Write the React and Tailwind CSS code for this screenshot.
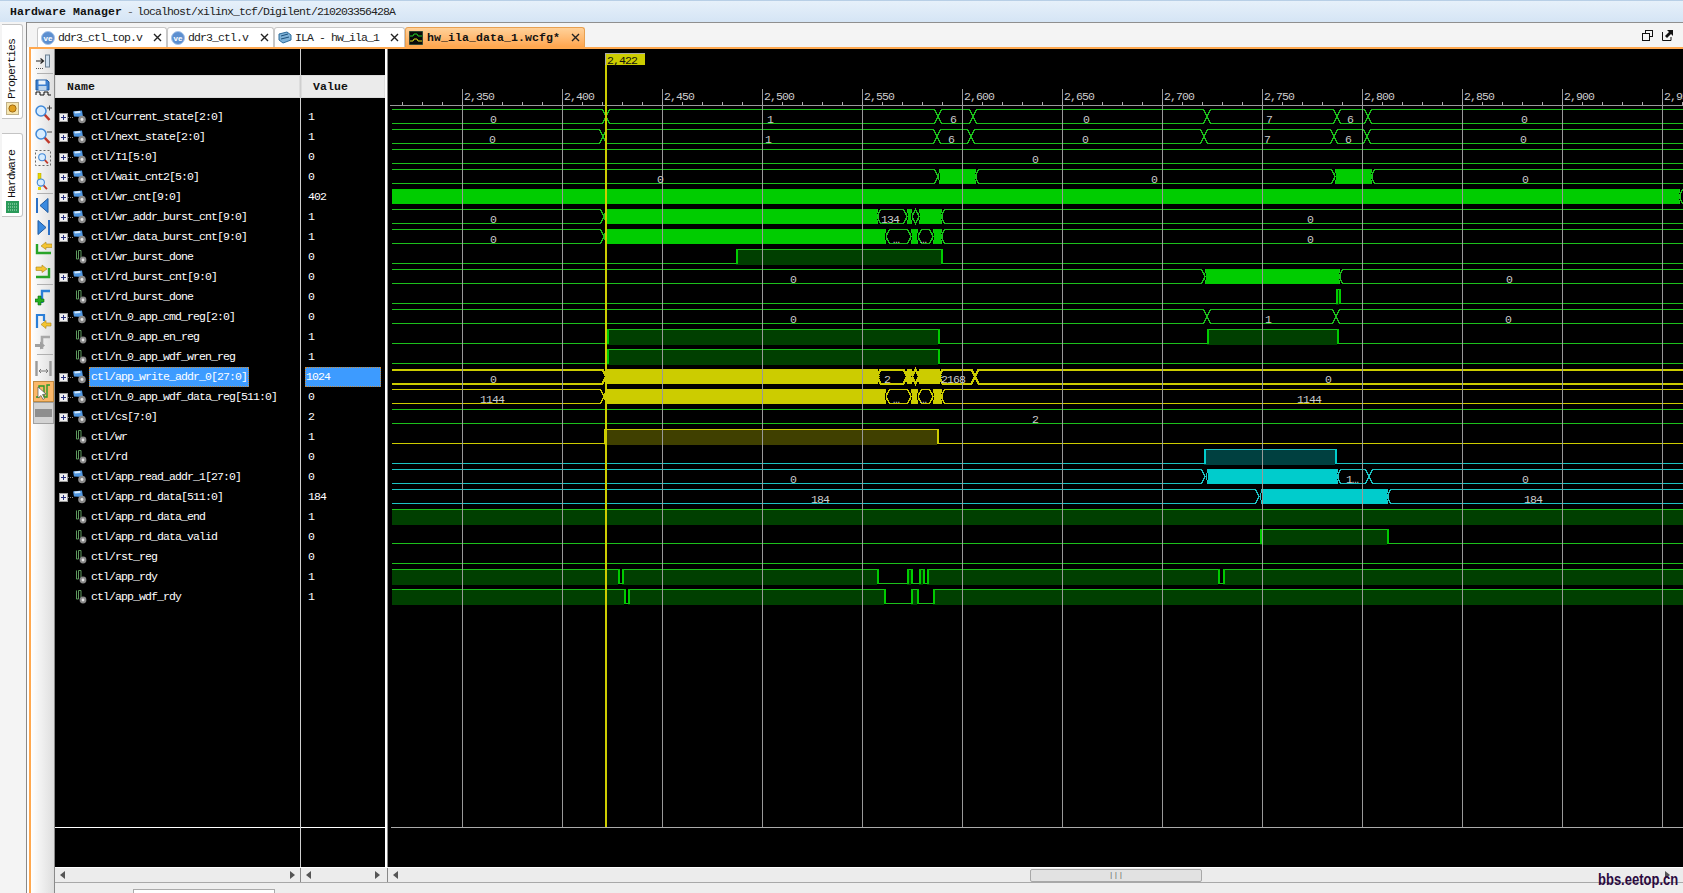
import React from "react";

const G = "#1cc01c", BR = "#00cc00", DG = "#003f00";
const Y = "#cccc00", DY = "#404000";
const C = "#1cc4c4", BC = "#00cccc", DC = "#004040";
const L = 392, R = 1683;
const topOf = (i) => 109 + 20 * i;

function Bus({ i, c, fc, w = 1, segs }) {
  const t = topOf(i) + 0.5, b = t + 14, m = (t + b) / 2;
  return (
    <g>
      {segs.map(([a, z, f], k) => {
        if (f) {
          const arms =
            (a > L ? `M${a - 2} ${m}L${a} ${t}M${a - 2} ${m}L${a} ${b}` : "") +
            (z < R ? `M${z + 2} ${m}L${z} ${t}M${z + 2} ${m}L${z} ${b}` : "");
          return (
            <g key={k}>
              <rect x={a} y={t - 0.5} width={z - a} height={15} fill={fc} />
              {arms ? <path d={arms} fill="none" stroke={c} strokeWidth={w} /> : null}
            </g>
          );
        }
        const ls = a <= L ? 0 : 3.5, rs = z >= R ? 0 : 3.5;
        const d = `M${a} ${ls ? m : t}L${a + ls} ${t}L${z - rs} ${t}L${z} ${rs ? m : t}` +
          (rs ? "" : `M${z} ${b}`) +
          `L${z - rs} ${b}L${a + ls} ${b}L${a} ${ls ? m : b}`;
        return <path key={k} d={d} fill="none" stroke={c} strokeWidth={w} />;
      })}
    </g>
  );
}

function Dig({ i, c, bc, fc, highs }) {
  const top = topOf(i), low = top + 14;
  let d = "";
  let cur = L;
  const first = highs[0];
  if (!first || first[0] > L) d = `M${L} ${low + 0.5}`;
  else d = `M${L} ${top + 0.5}`;
  highs.forEach(([a, z]) => {
    if (a > L) d += `L${a} ${low + 0.5}L${a} ${top + 0.5}`;
    d += `L${z} ${top + 0.5}`;
    if (z < R) d += `L${z} ${low + 0.5}`;
    cur = z;
  });
  if (cur < R) d += `L${R} ${low + 0.5}`;
  return (
    <g>
      {highs.map(([a, z], k) => (
        <rect key={k} x={a} y={top} width={z - a} height={16} fill={fc} />
      ))}
      <path d={d} fill="none" stroke={c} />
      {highs.flatMap(([a, z], k) => [
        a > L ? <rect key={`a${k}`} x={a - 0.5} y={top} width={2} height={15} fill={bc} /> : null,
        z < R ? <rect key={`z${k}`} x={z - 0.5} y={top} width={2} height={15} fill={bc} /> : null,
      ])}
    </g>
  );
}

const stateA = [[L, 606], [606, 938], [938, 973], [973, 1207], [1207, 1337], [1337, 1368], [1368, R]];
const stateB = [[L, 603], [603, 937], [937, 971], [971, 1204], [1204, 1334], [1334, 1367], [1367, R]];
const dataSegs = [[L, 604], [606, 885, 1], [886, 911], [912, 917, 1], [918, 933], [934, 941, 1], [941, R]];

const labels = [
  [0, 493, "0"], [0, 770, "1"], [0, 953, "6"], [0, 1086, "0"], [0, 1269, "7"], [0, 1350, "6"], [0, 1524, "0"],
  [1, 492, "0"], [1, 768, "1"], [1, 951, "6"], [1, 1085, "0"], [1, 1267, "7"], [1, 1348, "6"], [1, 1523, "0"],
  [2, 1035, "0"],
  [3, 660, "0"], [3, 1154, "0"], [3, 1525, "0"],
  [5, 493, "0"], [5, 890, "134"], [5, 1310, "0"],
  [6, 493, "0"], [6, 896, "…"], [6, 923, "…"], [6, 1310, "0"],
  [8, 793, "0"], [8, 1509, "0"],
  [10, 793, "0"], [10, 1268, "1"], [10, 1508, "0"],
  [13, 493, "0"], [13, 887, "2"], [13, 953, "2168"], [13, 1328, "0"],
  [14, 492, "1144"], [14, 896, "…"], [14, 923, "…"], [14, 1309, "1144"],
  [15, 1035, "2"],
  [18, 793, "0"], [18, 1352, "1…"], [18, 1525, "0"],
  [19, 820, "184"], [19, 1533, "184"],
];

const rulerLabels = [2350, 2400, 2450, 2500, 2550, 2600, 2650, 2700, 2750, 2800, 2850, 2900, 2950];
const rulerX = (t) => 462 + (t - 2350) * 2;

function Wave() {
  const ticks = [];
  for (let x = 402; x < R; x += 20) ticks.push(x);
  return (
    <svg width="1295" height="818" viewBox="388 49 1295 818" className="block bg-black shrink-0">
      <g shapeRendering="crispEdges">
        <Bus i={0} c={G} segs={stateA} />
        <Bus i={1} c={G} segs={stateB} />
        <Bus i={2} c={G} segs={[[L, R]]} />
        <Bus i={3} c={G} fc={BR} segs={[[L, 938], [940, 975, 1], [975, 1335], [1336, 1371, 1], [1371, R]]} />
        <Bus i={4} c={G} fc={BR} segs={[[L, 1679, 1], [1679, R]]} />
        <Bus i={5} c={G} fc={BR} segs={[[L, 604], [606, 877, 1], [877, 907], [908, 911, 1], [912, 919], [920, 941, 1], [941, R]]} />
        <Bus i={6} c={G} fc={BR} segs={dataSegs} />
        <Dig i={7} c={G} bc={BR} fc={DG} highs={[[736, 941]]} />
        <Bus i={8} c={G} fc={BR} segs={[[L, 1205], [1206, 1339, 1], [1339, R]]} />
        <Dig i={9} c={G} bc={BR} fc={DG} highs={[[1336, 1339]]} />
        <Bus i={10} c={G} segs={[[L, 1207], [1207, 1336], [1336, R]]} />
        <Dig i={11} c={G} bc={BR} fc={DG} highs={[[607, 938], [1207, 1337]]} />
        <Dig i={12} c={G} bc={BR} fc={DG} highs={[[607, 938]]} />
        <Bus i={13} c={Y} fc={Y} w={2} segs={[[L, 606], [607, 877, 1], [877, 907], [908, 911, 1], [912, 919], [920, 939, 1], [939, 975], [975, R]]} />
        <Bus i={14} c={Y} fc={Y} segs={dataSegs} />
        <Bus i={15} c={G} segs={[[L, R]]} />
        <Dig i={16} c={Y} bc={Y} fc={DY} highs={[[604, 937]]} />
        <Dig i={17} c={C} bc={BC} fc={DC} highs={[[1204, 1335]]} />
        <Bus i={18} c={C} fc={BC} segs={[[L, 1205], [1208, 1337, 1], [1337, 1369], [1369, R]]} />
        <Bus i={19} c={C} fc={BC} segs={[[L, 1259], [1262, 1387, 1], [1387, R]]} />
        <Dig i={20} c={G} bc={BR} fc={DG} highs={[[L, R]]} />
        <Dig i={21} c={G} bc={BR} fc={DG} highs={[[1260, 1387]]} />
        <Dig i={22} c={G} bc={BR} fc={DG} highs={[]} />
        <Dig i={23} c={G} bc={BR} fc={DG} highs={[[L, 618], [622, 877], [907, 911], [919, 923], [927, 1218], [1223, R]]} />
        <Dig i={24} c={G} bc={BR} fc={DG} highs={[[L, 624], [628, 884], [911, 917], [933, R]]} />

        {rulerLabels.map((t) => (
          <rect key={t} x={rulerX(t)} y={89} width={1} height={738} fill="#999999" />
        ))}
        <rect x={390} y={105} width={1293} height={1} fill="#999999" />
        {ticks.map((x) => (
          <rect key={x} x={x} y={102} width={1} height={3} fill="#aaaaaa" />
        ))}
        <rect x={391} y={827} width={1292} height={1} fill="#aaaaaa" />
      </g>

      <g className="font-['Liberation_Mono',monospace] text-[11.5px] tracking-[-0.9px]">
        {rulerLabels.map((t) => (
          <text key={t} x={rulerX(t) + 2} y={100} fill="#cccccc">{`${t.toString()[0]},${t.toString().slice(1)}`}</text>
        ))}
        {labels.map(([i, x, s], k) => (
          <text key={k} x={x} y={topOf(i) + 14} textAnchor="middle" fill="#cccccc">{s}</text>
        ))}
      </g>

      <rect x={605} y={53} width={2} height={774} fill={Y} />
      <rect x={605} y={53} width={40} height={12} fill="#aaaaaa" />
      <rect x={606} y={54} width={39} height={11} fill={Y} />
      <text x={607} y={64} fill="#111111" className="font-['Liberation_Mono',monospace] text-[11.5px] tracking-[-0.9px]">2,422</text>
    </svg>
  );
}

const Gear = ({ x = 9, y = 9, r = 3.8 }) => (
  <g>
    <circle cx={x} cy={y} r={r} fill="#8a8a8a" />
    <circle cx={x} cy={y} r="1.4" fill="#e4e4e4" />
  </g>
);

const BusIcon = () => (
  <svg width="13" height="14" viewBox="0 0 13 14" className="shrink-0">
    <path d="M0 1.5L9 0.5L10 7L1 6.5Z" fill="#4f96e0" />
    <path d="M1 1.5L7 1L7.5 3L2 3.5Z" fill="#cfe6fa" />
    <Gear x={9} y={9.5} />
  </svg>
);

const LeafIcon = () => (
  <svg width="12" height="14" viewBox="0 0 12 14" className="shrink-0">
    <path d="M1.5 0.5V9H3.5V0.5H6V7" fill="none" stroke="#5f9a5f" strokeWidth="1" />
    <Gear x={8} y={10} r={3.4} />
  </svg>
);

const Expand = () => (
  <span className="flex items-center shrink-0">
    <svg width="9" height="9" viewBox="0 0 9 9" className="block">
      <rect x="0.5" y="0.5" width="8" height="8" fill="#eeeeee" stroke="#9a9a9a" />
      <path d="M2 4.5H7M4.5 2V7" stroke="#27307f" strokeWidth="1" />
    </svg>
    <span className="w-[5px] border-t border-dotted border-[#888888]" />
  </span>
);

const signals = [
  ["ctl/current_state[2:0]", "1", 1], ["ctl/next_state[2:0]", "1", 1], ["ctl/I1[5:0]", "0", 1],
  ["ctl/wait_cnt2[5:0]", "0", 1], ["ctl/wr_cnt[9:0]", "402", 1], ["ctl/wr_addr_burst_cnt[9:0]", "1", 1],
  ["ctl/wr_data_burst_cnt[9:0]", "1", 1], ["ctl/wr_burst_done", "0", 0], ["ctl/rd_burst_cnt[9:0]", "0", 1],
  ["ctl/rd_burst_done", "0", 0], ["ctl/n_0_app_cmd_reg[2:0]", "0", 1], ["ctl/n_0_app_en_reg", "1", 0],
  ["ctl/n_0_app_wdf_wren_reg", "1", 0], ["ctl/app_write_addr_0[27:0]", "1024", 1, true],
  ["ctl/n_0_app_wdf_data_reg[511:0]", "0", 1], ["ctl/cs[7:0]", "2", 1], ["ctl/wr", "1", 0], ["ctl/rd", "0", 0],
  ["ctl/app_read_addr_1[27:0]", "0", 1], ["ctl/app_rd_data[511:0]", "184", 1], ["ctl/app_rd_data_end", "1", 0],
  ["ctl/app_rd_data_valid", "0", 0], ["ctl/rst_reg", "0", 0], ["ctl/app_rdy", "1", 0], ["ctl/app_wdf_rdy", "1", 0],
];

const Lens = ({ children }) => (
  <g>
    <path d="M9.5 10.5L14.5 16" stroke="#c0392b" strokeWidth="2.6" />
    <circle cx="6" cy="7" r="5" fill="#d6ecff" stroke="#3f88d8" strokeWidth="1.5" />
    {children}
  </g>
);

const Ico = ({ children, w = 17, h = 17 }) => (
  <svg width={w} height={h} viewBox={`0 0 ${w} ${h}`} className="block">{children}</svg>
);

const tools = [
  { h: 24, el: <Ico><path d="M1 8H8M5.5 5.5L8.5 8L5.5 10.5" fill="none" stroke="#222" strokeWidth="1.2" /><rect x="10.5" y="2" width="4" height="12" fill="#cfe0f0" stroke="#6b7f90" /><path d="M1 15.5H9" stroke="#555" strokeDasharray="1 1" /></Ico> },
  { sep: 1 },
  { h: 27, el: <Ico h={18}><path d="M1 1H12L14 3V11H1Z" fill="#3b7fd0" stroke="#1f5aa0" /><rect x="3.5" y="1.5" width="7" height="4" fill="#e9f2fb" /><rect x="3.5" y="7" width="8" height="4" fill="#bcd4ec" /><path d="M1 16V13H5V16H9V13H13V16H16" fill="none" stroke="#111" /></Ico> },
  { h: 23, el: <Ico><Lens /><path d="M12 4H17M14.5 1.5V6.5" stroke="#444" /></Ico> },
  { h: 23, el: <Ico><Lens /><path d="M12 5H17" stroke="#444" /></Ico> },
  { h: 23, el: <Ico><rect x="0.5" y="0.5" width="15" height="15" fill="none" stroke="#666" strokeDasharray="2 2" /><g transform="translate(3 2.5) scale(0.68)"><Lens /></g></Ico> },
  { h: 23, el: <Ico><rect x="3" y="0" width="3" height="9" fill="#e8d800" stroke="#a89a00" strokeWidth="0.5" /><rect x="3" y="14" width="3" height="3" fill="#e8d800" /><g transform="translate(1.5 4.5) scale(0.72)"><Lens /></g></Ico> },
  { sep: 1 },
  { h: 22, el: <Ico><path d="M2 1V16" stroke="#2b6fc4" strokeWidth="2" /><path d="M13 1.5L5 8.5L13 15.5Z" fill="#3a8ae0" stroke="#1f5aa0" /></Ico> },
  { h: 22, el: <Ico><path d="M14 1V16" stroke="#2b6fc4" strokeWidth="2" /><path d="M3 1.5L11 8.5L3 15.5Z" fill="#3a8ae0" stroke="#1f5aa0" /></Ico> },
  { h: 23, el: <Ico><path d="M2 3V12H16" fill="none" stroke="#28a428" strokeWidth="2.4" /><path d="M17 3H11V1L6 5L11 8.5V6.5H17Z" fill="#f4c430" stroke="#a8851a" strokeWidth="0.6" /></Ico> },
  { h: 23, el: <Ico><path d="M1 13H14V4" fill="none" stroke="#28a428" strokeWidth="2.4" /><path d="M1 3H7V1L12 5L7 8.5V6.5H1Z" fill="#f4c430" stroke="#a8851a" strokeWidth="0.6" /></Ico> },
  { sep: 1 },
  { h: 25, el: <Ico><path d="M7 14V2H15" fill="none" stroke="#2b7fd8" strokeWidth="2.4" /><path d="M3 7H6V10H9V13H6V16H3V13H0V10H3Z" fill="#22b022" stroke="#0f6a0f" strokeWidth="0.6" /></Ico> },
  { h: 22, el: <Ico><path d="M2 15V2H9V8" fill="none" stroke="#2b7fd8" strokeWidth="2.2" /><path d="M16 10H11V7.5L6 11.5L11 15.5V13H16Z" fill="#f4c430" stroke="#a8851a" strokeWidth="0.6" /></Ico> },
  { h: 22, el: <Ico><path d="M7 14V2H15" fill="none" stroke="#a8a8a8" strokeWidth="2.6" /><path d="M0 9H5V6.5L10 10.5L5 14.5V12H0Z" fill="#a0a0a0" /></Ico> },
  { sep: 1 },
  { h: 26, el: <Ico><path d="M1.5 1V16M15.5 1V16" stroke="#9a9a9a" strokeWidth="2.4" /><path d="M4 11H13M4 11L6 9M4 11L6 13M13 11L11 9M13 11L11 13" stroke="#777" fill="none" /></Ico> },
  { h: 21, active: 1, el: <Ico><path d="M1 14H4V3H9V14H12V2H15" fill="none" stroke="#2a9a2a" strokeWidth="1.4" /><path d="M3 4L3 15L6 12.5L8 16.5L9.5 15.5L7.5 11.5L11 11Z" fill="#fff" stroke="#555" strokeWidth="0.7" /></Ico> },
  { h: 22, pressed: 1, el: <span className="block w-[17px] h-[8px] bg-[#8e8e8e]" /> },
];

function Toolbar() {
  return (
    <div className="w-[24px] shrink-0 flex flex-col items-center border-r border-[#8a8a8a] bg-gradient-to-r from-white to-[#dedede]">
      {tools.map((t, k) =>
        t.sep ? (
          <div key={k} className="w-[16px] h-px bg-[#b0b0b0] shrink-0 ml-[5px]" />
        ) : (
          <div
            key={k}
            style={{ height: t.h }}
            className={`w-[21px] ml-[2px] flex items-center justify-center shrink-0 ${t.active ? "bg-[#fbb768] border border-[#c08a40]" : ""} ${t.pressed ? "bg-[#d3d3d3] border border-[#a0a0a0]" : ""}`}
          >
            {t.el}
          </div>
        )
      )}
    </div>
  );
}

const Header = ({ children, pl }) => (
  <div className={`h-[23px] shrink-0 bg-[#ebebeb] border border-[#dddddd] flex items-center font-bold tracking-[0.1px] text-[#111111] ${pl}`}>{children}</div>
);

function NameCol() {
  return (
    <div className="w-[245px] shrink-0 flex flex-col bg-black">
      <div className="h-[26px] shrink-0" />
      <Header pl="pl-[11px]">Name</Header>
      <div className="flex-1 pt-[9px]">
        {signals.map(([n, , bus, sel]) => (
          <div key={n} className="h-[20px] flex items-center text-white">
            <div className="w-[36px] pl-[4px] flex items-center shrink-0 h-full">
              {bus ? (<><Expand /><BusIcon /></>) : (<span className="pl-[16px] flex"><LeafIcon /></span>)}
            </div>
            <span className={`h-[20px] leading-[20px] ${sel ? "bg-[#3d9bff] outline-1 outline-dotted outline-[#c98a3a] -outline-offset-1 -ml-[2px] pl-[2px] pr-[2px]" : ""}`}>{n}</span>
          </div>
        ))}
      </div>
      <div className="h-[40px] shrink-0 border-t border-white" />
    </div>
  );
}

function ValueCol() {
  return (
    <div className="w-[84px] shrink-0 flex flex-col bg-black">
      <div className="h-[26px] shrink-0" />
      <Header pl="pl-[11px]">Value</Header>
      <div className="flex-1 pt-[9px]">
        {signals.map(([n, v, , sel]) => (
          <div key={n} className="h-[20px] flex items-center text-white">
            {sel ? (
              <span className="ml-[4px] w-[76px] h-[20px] leading-[20px] bg-[#3d9bff] pl-[1px] outline-1 outline-dotted outline-[#c98a3a] -outline-offset-1">{v}</span>
            ) : (
              <span className="pl-[7px]">{v}</span>
            )}
          </div>
        ))}
      </div>
      <div className="h-[40px] shrink-0 border-t border-white" />
    </div>
  );
}

const ArrowL = () => <span className="w-0 h-0 border-y-[4px] border-y-transparent border-r-[5px] border-r-[#555555]" />;
const ArrowR = () => <span className="w-0 h-0 border-y-[4px] border-y-transparent border-l-[5px] border-l-[#555555]" />;

const VeIcon = () => (
  <svg width="14" height="14" viewBox="0 0 14 14" className="shrink-0">
    <circle cx="7" cy="7" r="6.5" fill="#5c8fd0" stroke="#a8c4e8" />
    <text x="7" y="10" textAnchor="middle" fill="#ffffff" className="text-[8px] font-bold font-['Liberation_Sans',sans-serif] tracking-normal">ve</text>
  </svg>
);
const IlaIcon = () => (
  <svg width="14" height="14" viewBox="0 0 14 14" className="shrink-0">
    <path d="M1 3L9 1L13 4L13 9L5 12L1 9Z" fill="#7fb2d8" stroke="#2e6d9c" />
    <path d="M3 5L10 3M3 8L11 6" stroke="#1c4f78" />
  </svg>
);
const WaveIcon = () => (
  <svg width="14" height="14" viewBox="0 0 14 14" className="shrink-0">
    <rect width="14" height="14" fill="#0a0a0a" stroke="#5b7f5b" />
    <path d="M1 5H4L5 3H8L9 5H13" fill="none" stroke="#22cc22" />
    <path d="M1 10H4L5 8H8L9 10H13" fill="none" stroke="#dddd22" />
  </svg>
);

const tabs = [
  { w: 130, icon: <VeIcon />, t: "ddr3_ctl_top.v", gap: "pl-[3px]", sw: 95 },
  { w: 107, icon: <VeIcon />, t: "ddr3_ctl.v", gap: "pl-[3px]", sw: 72 },
  { w: 131, icon: <IlaIcon />, t: "ILA - hw_ila_1", gap: "pl-[3px]", sw: 95 },
  { w: 180, icon: <WaveIcon />, t: "hw_ila_data_1.wcfg*", active: 1, gap: "pl-[4px]", sw: 145 },
];

function Tabs() {
  return (
    <div className="h-[25px] shrink-0 bg-[#f4f4f4] border-t border-[#8f8f8f] flex items-end pl-[10px]">
      {tabs.map((t) => (
        <div
          key={t.t}
          style={{ width: t.w }}
          className={`h-[20px] flex items-center pl-[3px] rounded-t-[3px] border border-b-0 shrink-0 ${t.active ? "bg-gradient-to-b from-[#ffd199] to-[#ffa64d] border-[#e8a050]" : "bg-white border-[#c8c8c8]"}`}
        >
          {t.icon}
          <span style={{ width: t.sw }} className={`${t.gap} shrink-0 whitespace-nowrap ${t.active ? "font-bold tracking-[0.1px] text-[#111111]" : "text-[#222222]"}`}>{t.t}</span>
          <svg width="9" height="9" viewBox="0 0 9 9" className="shrink-0 ml-[3px]"><path d="M1 1L8 8M8 1L1 8" stroke="#222" strokeWidth="1.4" /></svg>
        </div>
      ))}
      <div className="flex-1 flex items-center justify-end gap-[9px] pr-[10px] h-full">
        <svg width="11" height="11" viewBox="0 0 11 11"><rect x="3.5" y="0.5" width="7" height="6" fill="none" stroke="#111" /><rect x="0.5" y="3.5" width="7" height="7" fill="#f4f4f4" stroke="#111" /></svg>
        <svg width="11" height="11" viewBox="0 0 11 11"><path d="M0.5 2V10.5H9V7" fill="none" stroke="#111" /><path d="M5 0H11V6L9 4L5 8L3 6L7 2Z" fill="#111" /></svg>
      </div>
    </div>
  );
}

const SideTab = ({ h, label, icon }) => (
  <div style={{ height: h }} className="w-[21px] ml-[2px] bg-white border border-l-0 border-[#c4c4c4] rounded-r-[3px] flex flex-col-reverse items-center justify-start pb-[3px] gap-[3px]">
    {icon}
    <span className="[writing-mode:vertical-rl] rotate-180 text-[#111111]">{label}</span>
  </div>
);

export default function App() {
  return (
    <div className="relative w-[1683px] h-[893px] overflow-hidden flex flex-col bg-[#f4f4f4] font-['Liberation_Mono',monospace] text-[11.5px] tracking-[-0.9px]">
      <div className="h-[22px] shrink-0 bg-gradient-to-b from-[#e6f0fa] to-[#d5e5f5] border-t border-[#b8cfe6] flex items-center pl-[10px] text-[#222222]">
        <span className="font-bold tracking-[0.1px] text-[#111111]">Hardware Manager</span>
        <span className="pl-[5px] text-[#666666]">-</span>
        <span className="pl-[4px]">localhost/xilinx_tcf/Digilent/210203356428A</span>
      </div>
      <div className="flex-1 flex min-h-0">
        <div className="w-[27px] shrink-0 border-r border-[#888888] pt-[2px] flex flex-col gap-[14px]">
          <SideTab h={95} label="Properties" icon={<svg width="13" height="13" viewBox="0 0 13 13"><rect x="0.5" y="0.5" width="12" height="12" fill="#f6e6b0" stroke="#bfb089" /><circle cx="6.5" cy="6.5" r="3.6" fill="#e0a020" stroke="#a06a10" /></svg>} />
          <SideTab h={84} label="Hardware" icon={<svg width="13" height="12" viewBox="0 0 13 12"><rect width="13" height="12" fill="#2a9a5a" /><path d="M2 3H11M2 6H11M2 9H11" stroke="#b6e6c6" strokeDasharray="1 1" /></svg>} />
        </div>
        <div className="flex-1 flex flex-col min-w-0">
          <Tabs />
          <div className="flex-1 flex min-h-0 pl-[2px] bg-white">
            <div className="flex-1 flex flex-col min-w-0 border-l-2 border-t-2 border-[#ffa84f]">
              <div className="flex-1 flex min-h-0">
                <Toolbar />
                <div className="flex-1 flex flex-col min-w-0">
                  <div className="flex flex-1 min-h-0">
                    <NameCol />
                    <div className="w-px shrink-0 bg-[#cfcfcf]" />
                    <ValueCol />
                    <div className="w-[3px] shrink-0 bg-white border-r border-[#888888]" />
                    <Wave />
                  </div>
                  <div className="h-[16px] shrink-0 flex bg-[#ececec] border-t border-white border-b border-b-[#a8a8a8]">
                    <div className="w-[245px] shrink-0 flex items-center justify-between px-[5px]"><ArrowL /><ArrowR /></div>
                    <div className="w-px shrink-0 bg-[#888888]" />
                    <div className="w-[84px] shrink-0 flex items-center justify-between px-[5px]"><ArrowL /><ArrowR /></div>
                    <div className="w-[3px] shrink-0 border-r border-[#888888]" />
                    <div className="flex-1 flex items-center pl-[5px] pr-[13px]">
                      <ArrowL />
                      <div className="w-[172px] h-[13px] ml-[632px] bg-[#e2e2e2] border border-[#a8a8a8] rounded-[2px] flex items-center justify-center text-[8px] tracking-normal text-[#666666] leading-none">|||</div>
                      <div className="flex-1" />
                      <ArrowR />
                    </div>
                  </div>
                  <div className="h-[10px] shrink-0 bg-[#eeeeee] pl-[78px] pt-[6px]">
                    <div className="w-[142px] h-[6px] bg-white border border-[#aaaaaa]" />
                  </div>
                </div>
              </div>
            </div>
          </div>
        </div>
      </div>
      <div className="absolute left-[1598px] top-[872px] font-['Liberation_Sans',sans-serif] font-bold text-[13px] tracking-normal leading-[16px] scale-y-125 text-[#2b0a40]">bbs.eetop.cn</div>
    </div>
  );
}
